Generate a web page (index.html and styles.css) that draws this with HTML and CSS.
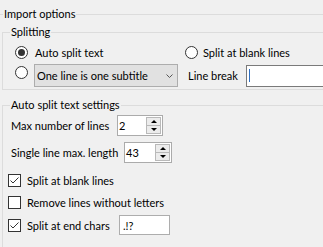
FILE: index.html
```html
<!DOCTYPE html>
<html lang="en">
<head>
  <meta charset="UTF-8">
  <title>Import options</title>
  <link rel="stylesheet" href="styles.css">
</head>
<body>

  <fieldset class="group group-outer">
    <legend>Import options</legend>

    <fieldset class="group group-split">
      <legend>Splitting</legend>
      <div class="split-grid">
        <div class="opt">
          <span class="radio checked"></span>
          <span>Auto split text</span>
        </div>
        <div class="opt opt-right">
          <span class="radio"></span>
          <span>Split at blank lines</span>
        </div>
        <div class="opt opt-tall">
          <span class="radio radio-combo"></span>
          <div class="combo">
            <span>One line is one subtitle</span>
            <svg class="chevron" width="7" height="4" viewBox="0 0 7 4">
              <polyline points="0.5,0.5 3.5,3.5 6.5,0.5" fill="none" stroke="#555" stroke-width="1"/>
            </svg>
          </div>
        </div>
        <div class="opt opt-tall">
          <span class="field-label">Line break</span>
          <div class="textbox textbox-focus"><span class="caret"></span></div>
        </div>
      </div>
    </fieldset>

    <fieldset class="group group-auto">
      <legend>Auto split text settings</legend>

      <div class="row row-max">
        <span class="row-label label-max">Max number of lines</span>
        <div class="spin spin-max">
          <span class="spin-value">2</span>
          <div class="spin-btns">
            <span class="spin-btn"><span class="arrow-up"></span></span>
            <span class="spin-btn"><span class="arrow-down"></span></span>
          </div>
        </div>
      </div>

      <div class="row row-len">
        <span class="row-label label-len">Single line max. length</span>
        <div class="spin spin-len">
          <span class="spin-value">43</span>
          <div class="spin-btns">
            <span class="spin-btn"><span class="arrow-up"></span></span>
            <span class="spin-btn"><span class="arrow-down"></span></span>
          </div>
        </div>
      </div>

      <div class="check-row check-blank">
        <span class="check">
          <svg width="11" height="11" viewBox="0 0 11 11"><polyline points="1.5,5.5 4,8 9.5,2.5" fill="none" stroke="#333" stroke-width="1"/></svg>
        </span>
        <span>Split at blank lines</span>
      </div>

      <div class="check-row check-remove">
        <span class="check"></span>
        <span>Remove lines without letters</span>
      </div>

      <div class="check-row check-end">
        <span class="check">
          <svg width="11" height="11" viewBox="0 0 11 11"><polyline points="1.5,5.5 4,8 9.5,2.5" fill="none" stroke="#333" stroke-width="1"/></svg>
        </span>
        <span class="end-text">Split at end chars</span>
        <div class="textbox textbox-small">.!?</div>
      </div>
    </fieldset>
  </fieldset>

</body>
</html>
```

FILE: styles.css
```css
html, body {
  margin: 0;
  padding: 0;
  overflow: hidden;
  background: #f0f0f0;
}

body {
  width: 323px;
  height: 247px;
  font-family: Lato, "Noto Sans", sans-serif;
  font-size: 11px;
  color: #000;
}

/* group boxes: right and bottom edges run out of the window */
.group {
  margin: 0;
  padding: 0 0 0 7px;
  border: 1px solid #dcdcdc;
  border-right: none;
  min-width: 0;
}

.group legend {
  padding: 0 1px;
  line-height: 16px;
}

.group-outer {
  margin: 6px 0 0 0;
  padding: 2px 0 0 2px;
  border-left: none;
  border-bottom: none;
  height: 241px;
  box-sizing: border-box;
}

.group-outer > legend {
  margin-left: 1px;
}

.group-split {
  padding-bottom: 2px;
}

.group-auto {
  margin-top: 7px;
  height: 150px;
  box-sizing: border-box;
  border-bottom: none;
}

/* splitting */
.split-grid {
  display: grid;
  grid-template-columns: 171px 1fr;
  row-gap: 4px;
  margin: 4px 0 0 5px;
}

.opt {
  display: flex;
  align-items: center;
  height: 16px;
  white-space: nowrap;
}

.opt-tall {
  height: 23px;
}

.radio {
  position: relative;
  flex: none;
  width: 13px;
  height: 13px;
  box-sizing: border-box;
  border: 1px solid #333;
  border-radius: 50%;
  background: #fff;
  margin-right: 7px;
}

.radio.checked::after {
  content: '';
  position: absolute;
  top: 2px; left: 2px; right: 2px; bottom: 2px;
  border-radius: 50%;
  background: #333;
}

.opt-right .radio {
  margin-left: -1px;
  margin-right: 5px;
}

.radio-combo {
  align-self: flex-start;
  margin-top: 2px;
  margin-right: 6px;
}

.combo {
  display: flex;
  align-items: center;
  justify-content: space-between;
  width: 144px;
  height: 23px;
  box-sizing: border-box;
  border: 1px solid #adadad;
  background: #e1e1e1;
  padding: 0 4px 0 2px;
}

.field-label {
  flex: none;
  width: 58px;
  padding-left: 2px;
}

.textbox {
  display: flex;
  align-items: center;
  flex: none;
  box-sizing: border-box;
  background: #fff;
}

.textbox-focus {
  flex: 1;
  height: 22px;
  border: 1px solid #7a7a7a;
  border-right: none;
  padding-left: 2px;
}

.caret {
  width: 1px;
  height: 13px;
  background: #2f6fc0;
}

/* auto split settings */
.row {
  display: flex;
  align-items: center;
  height: 21px;
  padding-left: 1px;
  white-space: nowrap;
}

.row-max {
  margin-top: 2px;
}

.row-len {
  margin-top: 6px;
}

.label-max { width: 106px; }
.label-len { width: 113px; }

.spin {
  display: flex;
  height: 21px;
  box-sizing: border-box;
  border: 1px solid #ababab;
  background: #fff;
}

.spin-max { width: 46px; }
.spin-len { width: 48px; }

.spin-value {
  flex: 1;
  padding-left: 1px;
  line-height: 19px;
}

.spin-btns {
  display: flex;
  flex-direction: column;
  width: 15px;
  padding: 1px 1px 1px 0;
}

.spin-btn {
  flex: 1;
  display: flex;
  align-items: center;
  justify-content: center;
  border: 1px solid #b9b9b9;
  background: #ececec;
}

.spin-btn + .spin-btn {
  border-top: none;
}

.arrow-up, .arrow-down {
  width: 0;
  height: 0;
  border-left: 3px solid transparent;
  border-right: 3px solid transparent;
}

.arrow-up { border-bottom: 3px solid #000; }
.arrow-down { border-top: 3px solid #000; }

.check-row {
  display: flex;
  align-items: center;
  height: 16px;
  margin-left: -2px;
  white-space: nowrap;
}

.check-blank { margin-top: 9px; }
.check-remove { margin-top: 6px; }
.check-end { margin-top: 5px; height: 20px; }

.check {
  display: flex;
  align-items: center;
  justify-content: center;
  flex: none;
  width: 13px;
  height: 13px;
  box-sizing: border-box;
  border: 1px solid #333;
  background: #fff;
  margin-right: 6px;
}

.end-text {
  width: 92px;
}

.textbox-small {
  width: 51px;
  height: 20px;
  border: 1px solid #adadad;
  padding-left: 3px;
}
```
